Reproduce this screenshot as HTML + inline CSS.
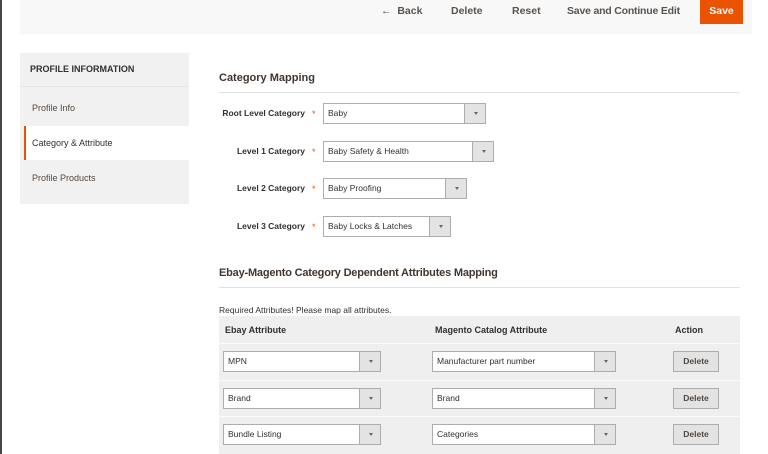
<!DOCTYPE html>
<html><head><meta charset="utf-8"><style>
*{margin:0;padding:0;box-sizing:border-box}
body{width:768px;height:454px;overflow:hidden;background:#fff;font-family:"Liberation Sans",sans-serif;color:#41362f;position:relative}
.a{position:absolute}
.edge{left:0;top:0;width:2px;height:454px;background:#4a4542}
.hdr{left:20px;top:0;width:732px;height:34px;background:#f8f8f8}
.hb{top:5px;font-size:10.5px;color:#5a524c;font-weight:bold}
.save{left:700px;top:0;width:43px;height:24px;background:#eb5202;color:#fff;font-size:10.5px;font-weight:bold;text-align:center;line-height:23px}
.side{left:20px;top:53px;width:169px;height:151px;background:#f1f1f1}
.si{left:20px;width:169px;font-size:9px;color:#514943;padding-left:12px}
.h2{font-size:11px;font-weight:bold;color:#41362f}
.line{height:1px;background:#e3e3e3;left:219px;width:521px}
.lbl{font-size:8.5px;font-weight:bold;color:#303030;text-align:right;width:120px;left:185px}
.star{font-size:9px;color:#eb5202;left:312px}
.sel{height:21px;border:1px solid #adadad;background:#fff;font-size:8.5px;color:#303030;padding-left:4px;line-height:19px}
.sel::after{content:"";position:absolute;right:0;top:0;width:20px;height:19px;background:#e3e3e3;border-left:1px solid #adadad}
.sel i{position:absolute;right:7px;top:8px;width:0;height:0;border-left:2.5px solid transparent;border-right:2.5px solid transparent;border-top:3px solid #666;z-index:2}
.tbl{left:219px;top:316px;width:521px;height:138px;background:#efefef}
.rl{left:219px;width:521px;height:1px;background:#fafafa}
.th{top:325px;font-size:9px;font-weight:bold;color:#303030}
.del{left:673px;width:46px;height:21px;background:#e3e3e3;border:1px solid #adadad;font-size:8.5px;font-weight:bold;color:#514943;text-align:center;line-height:19px}
</style></head><body>
<div class="a edge"></div>
<div class="a hdr"></div>
<div class="a hb" style="left:381px">&#8592;&nbsp; Back</div>
<div class="a hb" style="left:451px">Delete</div>
<div class="a hb" style="left:512px">Reset</div>
<div class="a hb" style="left:567px;letter-spacing:-0.2px">Save and Continue Edit</div>
<div class="a save">Save</div>

<div class="a side"></div>
<div class="a" style="left:30px;top:64px;font-size:9px;font-weight:bold;color:#303030">PROFILE INFORMATION</div>
<div class="a" style="left:20px;top:86px;width:169px;height:1px;background:#e6e6e6"></div>
<div class="a si" style="top:103px">Profile Info</div>
<div class="a" style="left:24px;top:126px;width:165px;height:34px;background:#fff;border-left:2px solid #eb5202"></div>
<div class="a si" style="top:138px;color:#303030">Category &amp; Attribute</div>
<div class="a si" style="top:173px">Profile Products</div>

<div class="a h2" style="left:219px;top:72px">Category Mapping</div>
<div class="a line" style="top:92px"></div>

<div class="a lbl" style="top:108px">Root Level Category</div><div class="a star" style="top:109px">*</div>
<div class="a sel" style="left:323px;top:103px;width:163px">Baby<i></i></div>
<div class="a lbl" style="top:146px">Level 1 Category</div><div class="a star" style="top:147px">*</div>
<div class="a sel" style="left:323px;top:141px;width:171px">Baby Safety &amp; Health<i></i></div>
<div class="a lbl" style="top:183px">Level 2 Category</div><div class="a star" style="top:184px">*</div>
<div class="a sel" style="left:323px;top:178px;width:144px">Baby Proofing<i></i></div>
<div class="a lbl" style="top:221px">Level 3 Category</div><div class="a star" style="top:222px">*</div>
<div class="a sel" style="left:323px;top:216px;width:128px">Baby Locks &amp; Latches<i></i></div>

<div class="a h2" style="left:219px;top:267px;letter-spacing:-0.2px">Ebay-Magento Category Dependent Attributes Mapping</div>
<div class="a line" style="top:287px"></div>
<div class="a" style="left:219px;top:305px;font-size:8.5px;color:#303030">Required Attributes! Please map all attributes.</div>

<div class="a tbl"></div>
<div class="a rl" style="top:343px"></div>
<div class="a rl" style="top:380px"></div>
<div class="a rl" style="top:416px"></div>
<div class="a th" style="left:225px">Ebay Attribute</div>
<div class="a th" style="left:435px">Magento Catalog Attribute</div>
<div class="a th" style="left:675px">Action</div>

<div class="a sel" style="left:223px;top:351px;width:158px">MPN<i></i></div>
<div class="a sel" style="left:432px;top:351px;width:184px">Manufacturer part number<i></i></div>
<div class="a del" style="top:351px">Delete</div>
<div class="a sel" style="left:223px;top:388px;width:158px">Brand<i></i></div>
<div class="a sel" style="left:432px;top:388px;width:184px">Brand<i></i></div>
<div class="a del" style="top:388px">Delete</div>
<div class="a sel" style="left:223px;top:424px;width:158px">Bundle Listing<i></i></div>
<div class="a sel" style="left:432px;top:424px;width:184px">Categories<i></i></div>
<div class="a del" style="top:424px">Delete</div>
</body></html>
